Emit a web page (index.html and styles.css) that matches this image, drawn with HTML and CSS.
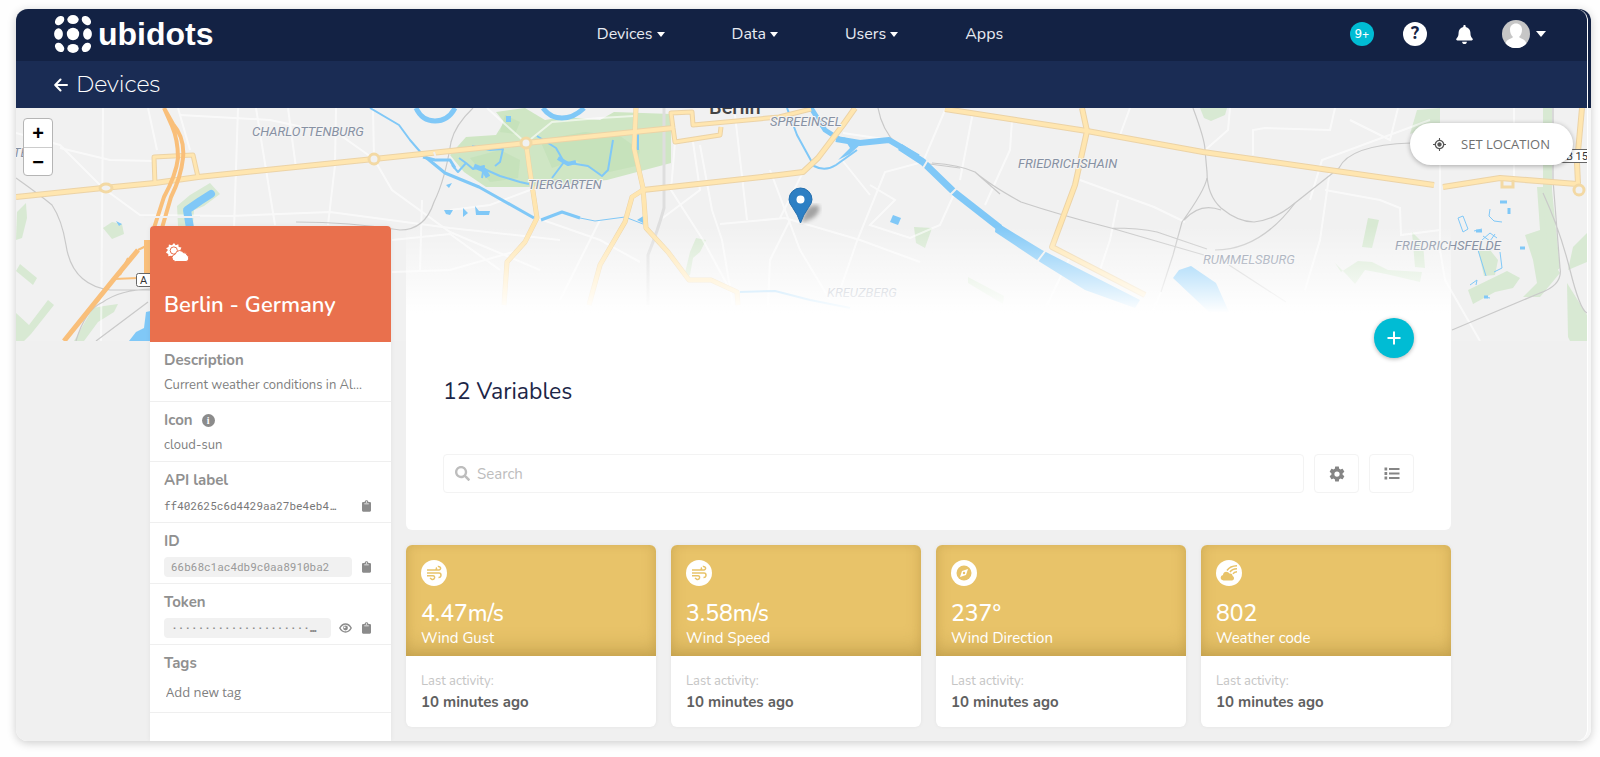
FILE: index.html
```html
<!DOCTYPE html>
<html lang="en">

<head>
    <meta charset="utf-8">
    <title>Berlin - Germany | Devices</title>
    <link rel="stylesheet" href="styles.css">
</head>

<body>

<!-- shared icons -->
<svg class="sprite" aria-hidden="true">
    <symbol id="clipboard" viewBox="0 0 12 16">
        <path fill-rule="evenodd" d="M1.500 2.500H3.500C3.700 1.200 4.700.4 6 .4S8.300 1.200 8.500 2.500H10.500Q12 2.500 12 4V14Q12 15.500 10.500 15.500H1.500Q0 15.500 0 14V4Q0 2.500 1.500 2.500ZM6 1.800A.9.9 0 1 0 6 3.600A.9.9 0 1 0 6 1.800ZM3 4.800V5.800H9V4.800Z"/>
    </symbol>
    <symbol id="wind" viewBox="0 0 16 16">
        <path fill="none" stroke="currentColor" stroke-width="1.500" d="M1 5H8M1 8H13Q15 8 15 10.200Q14.800 12.500 12.500 12.400M1 10.800H7Q9 11 8.500 13Q7.800 15 5.500 14.200L4 13M8 5H13Q15 4.500 14.500 2.800Q13.800 1 11.800 1.500M1 8H4M9.600 5Q11.200 4 10 2.600"/>
    </symbol>
</svg>

<div class="frame">
<div class="window">

    <!-- top bar -->
    <header class="topbar">
        <a href="#" class="logo">
            <svg width="38" height="38" viewBox="0 0 38 38">
                <g fill="#fff">
                    <circle cx="19" cy="19" r="6.200"/>
                    <ellipse cx="19" cy="4.600" rx="5.700" ry="4.500"/>
                    <ellipse cx="19" cy="33.400" rx="5.700" ry="4.500"/>
                    <ellipse cx="4.500" cy="19" rx="4.400" ry="5.700"/>
                    <ellipse cx="33.500" cy="19" rx="4.400" ry="5.700"/>
                    <ellipse cx="5.600" cy="5.600" rx="5.300" ry="3.900" transform="rotate(-45 5.600 5.600)"/>
                    <ellipse cx="32.400" cy="5.600" rx="5.300" ry="3.900" transform="rotate(45 32.400 5.600)"/>
                    <ellipse cx="5.600" cy="32.400" rx="5.300" ry="3.900" transform="rotate(45 5.600 32.400)"/>
                    <ellipse cx="32.400" cy="32.400" rx="5.300" ry="3.900" transform="rotate(-45 32.400 32.400)"/>
                </g>
            </svg>
            <span>ubidots</span>
        </a>
        <nav class="menu">
            <a href="#">Devices<i class="caret"></i></a>
            <a href="#">Data<i class="caret"></i></a>
            <a href="#">Users<i class="caret"></i></a>
            <a href="#">Apps</a>
        </nav>
        <div class="tools">
            <button class="news">9+</button>
            <button class="help">?</button>
            <button class="bell" aria-label="Notifications">
                <svg width="17" height="19" viewBox="0 0 448 512"><path fill="#fff" d="M224 512c35.320 0 63.970-28.650 63.970-64H160.030c0 35.350 28.650 64 63.970 64zm215.390-149.710c-19.320-20.760-55.470-51.990-55.470-154.290 0-77.700-54.480-139.900-127.940-155.160V32c0-17.670-14.320-32-31.980-32s-31.980 14.330-31.980 32v20.840C118.560 68.100 64.080 130.300 64.080 208c0 102.300-36.150 133.530-55.470 154.290-6 6.450-8.660 14.160-8.610 21.710.11 16.400 12.980 32 32.100 32h383.800c19.120 0 32-15.600 32.100-32 .05-7.550-2.610-15.270-8.610-21.710z"/></svg>
            </button>
            <button class="user" aria-label="Account">
                <svg width="28" height="28" viewBox="0 0 28 28">
                    <circle cx="14" cy="14" r="14" fill="#c6c6c6"/>
                    <path fill="#fff" d="M14 3.500C10.500 3.500 8 6 8 9.500C8 12.500 9 15 11 17C9.500 19 4.500 19 3.600 23.500A14 14 0 0 0 24.400 23.500C23.500 19 18.500 19 17 17C19 15 20 12.500 20 9.500C20 6 17.500 3.500 14 3.500Z"/>
                </svg>
                <i class="caret big"></i>
            </button>
        </div>
    </header>

    <div class="subbar">
        <a href="#">
            <svg width="14" height="14" viewBox="0 0 14 14"><path fill="none" stroke="#fff" stroke-width="2" stroke-linecap="round" stroke-linejoin="round" d="M13 7H1.500M6.500 1.500L1.200 7L6.500 12.500"/></svg>
            <span>Devices</span>
        </a>
    </div>

    <!-- map -->
    <section class="map">
        <svg class="map-art" viewBox="16 108 1571 233" preserveAspectRatio="xMidYMin slice">
            <rect x="16" y="108" width="1571" height="233" fill="#f1f1f1"/>

            <!-- parks -->
            <g fill="#d8e9d3">
                <path d="M17 212L26 203L27 218L22 238L16 240Z"/>
                <path d="M103 228L112 222L122 224L124 234L112 239Z"/>
                <path d="M20 264L37 278L33 285L16 271Z"/>
                <path d="M16 313L29 325L48 300L54 305L31 334L24 341H16Z"/>
                <path d="M74 341L93 308L104 306L118 304L114 312L98 322L84 341Z"/>
                <path d="M178 226L177 206L190 195L210 183L220 194L204 206L194 210L193 226Z"/>
                <path d="M1200 108H1227L1225 115L1211 121L1204 118Z"/>
                <path d="M1417 110L1440 108V124L1410 134Z"/>
                <path d="M1368 218L1379 220L1372 248L1362 247Z"/>
                <path d="M1412 232L1423 243L1425 268L1415 267Z"/>
                <path d="M1335 263L1341 272L1358 261L1372 262L1388 270L1422 272L1420 282L1386 274L1365 270L1355 284L1347 275Z"/>
                <path d="M1537 187L1545 187L1553 262L1560 273L1540 297L1523 297L1537 283L1533 260L1525 235L1540 230Z"/>
                <path d="M1543 108H1552V190L1560 268L1550 276L1543 200Z"/>
                <path d="M1587 233L1573 247L1568 270L1587 262Z"/>
                <path d="M1567 283L1568 337L1570 341H1587V315Z"/>
                <path d="M1468 290L1507 271L1520 278L1513 288L1495 292L1473 304Z"/>
                <path d="M1478 250L1490 250L1498 260L1495 275L1484 276Z"/>
                <path d="M696 238L706 240L700 252L693 258L690 275L684 277L690 252Z"/>
                <path d="M914 227L932 228L925 248L916 243Z"/>
                <path d="M968 277L1004 296L1003 304L968 283Z"/>
            </g>
            <path fill="#cfe6c4" d="M450 155L466 137L496 135L504 122L496 112L525 108L545 120L564 117L600 120L614 112L671 114V163L607 180L570 184L529 187L486 187L464 172Z"/>
            <path fill="#bfdfb5" opacity=".6" d="M540 140L585 132L620 136L640 150L636 166L600 174L575 160L552 168ZM470 158L500 150L520 160L518 178L490 182ZM505 115L520 122L515 134L500 132Z"/>

            <!-- small streets -->
            <g fill="none" stroke="#fff" stroke-width="2" opacity=".6">
                <path d="M16 133L60 145L103 188L140 215L230 216L330 212L450 228L560 240"/>
                <path d="M60 148L110 160L155 161M103 108L101 341M148 108L157 150M178 108L190 150M238 108L234 230M256 108L275 225M288 108L296 168"/>
                <path d="M336 108L335 165L328 225M374 159L373 108M374 159L392 190L450 232L540 270M374 159L340 135L270 120L180 115"/>
                <path d="M422 200L420 270M392 272L450 270L520 250M392 240L450 234L500 270M537 218L600 240L640 262"/>
                <path d="M526 143L487 108M526 143L552 122L600 118L634 116M700 145L712 210L722 240L733 305M735 115L747 220M693 142L700 190L660 220"/>
                <path d="M675 142L671 190L703 240L730 290M720 224L785 218L860 240L920 262M790 220L770 260L768 305M803 172L780 218"/>
                <path d="M843 133L890 140L923 162M945 110L923 162L885 172L857 241L840 290M973 112L960 180M1012 120L1010 150L985 205"/>
                <path d="M870 185L895 200L870 225L910 238L940 225L955 192M842 160L870 195M1120 135L1130 108M1080 180L1154 207L1185 222M1118 200L1110 240L1100 270"/>
                <path d="M1230 108L1228 130L1203 152M1253 155L1253 130L1265 128L1330 130L1335 108M1350 120L1390 140L1398 108M1310 200L1322 160L1430 120M1325 190L1380 200L1400 208L1401 235L1440 230"/>
                <path d="M1440 124V250L1445 280L1480 341M1330 170L1320 240L1305 290M1514 108V180"/>
                <path d="M1071 255L1047 305M1161 292L1140 341M770 170L800 250L830 300M600 220L560 300M450 210L490 205L530 190"/>
            </g>

            <!-- rail -->
            <g fill="none" stroke="#c9c9c9" stroke-width="1.200">
                <path d="M16 178Q40 195 52 205Q62 220 66 245Q72 285 110 290H150M76 341Q85 310 103 302Q120 290 150 289M96 341L148 302"/>
                <path d="M473 108Q455 125 451 142Q445 180 434 202Q425 230 400 230Q350 222 296 222"/>
                <path d="M932 163Q960 165 975 172Q990 185 1021 202Q1060 215 1111 228L1204 255M975 172L1000 194M1111 228Q1140 228 1157 232L1207 249"/>
                <path d="M1193 108Q1205 140 1205 150L1207 172Q1207 195 1221 208Q1238 222 1254 222Q1275 220 1295 203L1339 168Q1350 145 1411 143"/>
                <path d="M1207 178Q1205 190 1182 222L1173 255L1161 292M1184 220Q1200 202 1221 210M1295 203Q1260 250 1215 250M1229 265L1286 302"/>
                <path d="M1452 330L1540 293Q1563 285 1560 268L1553 180V108M1543 193Q1560 230 1570 270T1587 313M878 108Q882 130 897 145M922 163L960 168"/>
            </g>
            <path fill="none" stroke="#dedede" stroke-width="3" d="M664 108V208Q658 230 648 255V305"/>

            <!-- water -->
            <g fill="none" stroke="#80c8f7" stroke-linejoin="round">
                <path stroke-width="2" d="M370 108L399 125L410 140L423 155"/>
                <path stroke-width="2" d="M452 165L458 172L466 163L473 169L484 166L482 178M466 163L459 158M482 168L500 176L520 182L529 184M472 146L490 150L503 149L500 162L495 166"/>
                <path stroke-width="5" d="M474 166L484 170L488 177"/>
                <path stroke-width="3" d="M423 155L445 173L479 187L534 218"/>
                <path stroke-width="3" d="M423 157L435 160L450 160L455 168"/>
                <path stroke-width="2" d="M537 136L556 148L564 162L588 166L602 176L608 170L613 140M564 162L552 178M638 134V150"/>
                <path stroke-width="4" d="M558 158L568 164L576 162"/>
                <path stroke-width="3" d="M541 220L562 212L580 218"/>
                <path stroke-width="1" d="M580 218L595 221L625 217L643 224"/>
                <path stroke-width="5" d="M416 108Q422 121 435 121T455 108M543 108Q550 118 562 118T584 108"/>
                <path stroke-width="8" stroke-linecap="round" d="M190 228L187 210L200 201L211 194"/>
                <path stroke-width="5" d="M811 108L825 130L839 139"/>
                <path stroke-width="6" d="M836 139L860 143L889 140L918 157"/>
                <path stroke-width="7" d="M900 147L923 162L954 192L1000 228"/>
                <path stroke-width="2" d="M787 108L797 135L814 166Q825 172 836 165L857 150"/>
                <path stroke-width="2" d="M740 292L775 291L810 300L850 308"/>
                <path stroke-width="1" d="M1490 209L1489 216L1494 221L1502 222M1474 231L1482 229M1482 240L1490 233L1497 238M1478 250L1486 276M1500 252L1502 268L1494 272M1470 285L1477 280L1476 285M1484 297L1490 298M1458 218L1463 232L1468 229L1463 216ZM1483 236L1490 241L1495 234"/>
                <path stroke-width="3" d="M1500 202H1507M1509 208V214M1520 248H1525M1476 231H1482M1484 297H1488"/>
            </g>
            <g fill="#80c8f7">
                <path d="M843 137L862 143L850 154L838 160L850 148Z"/>
                <path d="M996 222L1042 250L1140 300L1135 308L1085 290L1040 262L995 232Z"/>
                <path d="M1173 278L1179 270L1191 266L1216 283L1229 312H1209Z"/>
                <path d="M893 215L901 218L898 225L890 222Z"/>
                <path d="M129 341L136 332L144 328L146 312L155 310V341Z"/>
                <path d="M444 210L453 210L450 215L446 214ZM463 208L468 213L463 217ZM475 206L479 211L490 211L489 215L476 215ZM446 185L452 183L449 188ZM456 181L461 183M637 220L645 215L643 223Z"/>
                <path d="M506 116H511V122H506ZM116 221L122 224L119 226Z"/>
            </g>

            <!-- main roads, casing first -->
            <g fill="none" stroke="#ecd3a6" stroke-width="6" stroke-linejoin="round">
                <path d="M16 197L103 188L155 183L198 177L374 159L526 143L673 128"/>
                <path d="M155 185L154 157L193 155L198 177" stroke-width="5"/>
                <path d="M673 128L671 113L692 112L693 125L779 117L811 109M673 128L675 142L720 135L721 127" stroke-width="5"/>
                <path d="M526 143L529 165L537 218L525 242L507 262L504 305" stroke-width="5"/>
                <path d="M636 108L634 148L643 188L646 228L668 252L689 280L711 280L737 292L738 305" stroke-width="5"/>
                <path d="M643 190L632 197L625 222L600 265L589 305" stroke-width="5"/>
                <path d="M643 190L779 175L803 172L818 158L843 125L855 108"/>
                <path d="M945 109L1087 131L1203 152L1329 170L1434 185M1443 187L1500 178L1577 184"/>
                <path d="M1082 108L1087 131L1075 185L1052 247L1145 295"/>
                <path d="M1582 108L1577 163L1578 184"/>
            </g>
            <g fill="none" stroke="#ffe6b0" stroke-width="4" stroke-linejoin="round">
                <path d="M16 197L103 188L155 183L198 177L374 159L526 143L673 128"/>
                <path d="M155 185L154 157L193 155L198 177" stroke-width="3"/>
                <path d="M673 128L671 113L692 112L693 125L779 117L811 109M673 128L675 142L720 135L721 127" stroke-width="3"/>
                <path d="M526 143L529 165L537 218L525 242L507 262L504 305"/>
                <path d="M636 108L634 148L643 188L646 228L668 252L689 280L711 280L737 292L738 305"/>
                <path d="M643 190L632 197L625 222L600 265L589 305"/>
                <path d="M643 190L779 175L803 172L818 158L843 125L855 108"/>
                <path d="M945 109L1087 131L1203 152L1329 170L1434 185M1443 187L1500 178L1577 184"/>
                <path d="M1082 108L1087 131L1075 185L1052 247L1145 295"/>
                <path d="M1582 108L1577 163L1578 184"/>
            </g>
            <g fill="#f1f1f1" stroke="#f3d9a4" stroke-width="3">
                <ellipse cx="106" cy="188" rx="6" ry="4"/>
                <circle cx="374" cy="159" r="5"/>
                <circle cx="526" cy="143" r="5"/>
                <circle cx="1579" cy="190" r="5"/>
                <path d="M1502 181V187H1513V180" fill="none"/>
            </g>
            <!-- autobahn -->
            <g fill="none" stroke="#f9bf7a" stroke-width="4">
                <path d="M164 108L173 124Q185 138 183 158Q181 177 171 197L162 228M164 108L172 126Q178 140 178 158Q176 175 164 197L154 228"/>
                <path d="M64 341L114 279L138 250" stroke-width="5"/>
                <path d="M114 279L138 278M120 275L128 258M138 250L146 246" stroke-width="2"/>
                <path d="M147 240V273" stroke-width="6"/>
            </g>
            <path fill="none" stroke="#f0f0f0" stroke-width="2" d="M144 217H200M434 152L436 158M923 168L929 158M949 196L958 187M1036 263L1046 250"/>

            <g class="area">
                <text x="252" y="136">CHARLOTTENBURG</text>
                <text x="770" y="126">SPREEINSEL</text>
                <text x="528" y="189">TIERGARTEN</text>
                <text x="1018" y="168">FRIEDRICHSHAIN</text>
                <text x="1203" y="264">RUMMELSBURG</text>
                <text x="1395" y="250">FRIEDRICHSFELDE</text>
                <text x="827" y="297">KREUZBERG</text>
                <text x="13" y="157">TE</text>
            </g>
            <text class="city" x="709" y="114">Berlin</text>
            <g fill="#fff" stroke="#666">
                <rect x="136.500" y="273.500" width="24" height="13" rx="2"/>
                <rect x="1560.500" y="149.500" width="34" height="13" rx="2"/>
            </g>
            <text class="road" x="140" y="284">A</text>
            <text class="road" x="1566" y="160">B 158</text>
        </svg>

        <svg class="marker" width="40" height="38" viewBox="0 0 40 38">
            <defs>
                <linearGradient id="pin" x1="0" y1="0" x2="0" y2="1"><stop offset="0" stop-color="#2f7fc2"/><stop offset="1" stop-color="#2a7fc6"/></linearGradient>
                <filter id="soft"><feGaussianBlur stdDeviation="2"/></filter>
            </defs>
            <path fill="#555" opacity=".5" filter="url(#soft)" d="M13 36L18 22Q26 16 31 19Q33 25 25 31Z"/>
            <path fill="url(#pin)" stroke="#256fae" d="M12.500 36Q10 28 4.500 20.500Q1 16 1 12.500A11.500 11.500 0 0 1 24 12.500Q24 16 20.500 20.500Q15 28 12.500 36Z"/>
            <circle cx="12.500" cy="12.500" r="4" fill="#fff"/>
        </svg>

        <div class="zoom">
            <button>+</button>
            <button>&minus;</button>
        </div>
        <button class="set-location">
            <svg width="13" height="13" viewBox="0 0 24 24"><path fill="#555" fill-rule="evenodd" d="M12 8c-2.210 0-4 1.790-4 4s1.790 4 4 4 4-1.790 4-4-1.790-4-4-4zm8.940 3c-.46-4.170-3.770-7.480-7.940-7.940V0h-2v3.060C6.830 3.520 3.520 6.830 3.060 11H0v2h3.060c.46 4.170 3.770 7.480 7.940 7.940V24h2v-3.060c4.170-.46 7.480-3.770 7.940-7.940H24v-2h-3.060zM12 18.500c-3.600 0-6.500-2.900-6.500-6.500s2.900-6.500 6.500-6.500 6.500 2.900 6.500 6.500-2.900 6.500-6.500 6.500z"/></svg>
            SET LOCATION
        </button>
    </section>

    <!-- content -->
    <main class="content">
        <aside class="side">
            <div class="side-head">
                <svg width="23" height="19" viewBox="0 0 23 19">
                    <path fill="#fff" d="M8 0L9.700 2.200L12.300 1.200L12.700 4L15.400 4.600L14.300 7.200L15 8H1L2.100 7L0 5.200L2.600 4L2.900 1.400L6 2.300Z"/>
                    <path fill="#fff" d="M1 8L0 9.800L2.300 10.900L2.300 13.300L5 12.700L8 14L14 8Z"/>
                    <circle cx="7.800" cy="7.500" r="3.600" fill="none" stroke="#e9704d"/>
                    <path fill="#fff" stroke="#e9704d" d="M9.500 18.500Q5.800 18 6 14.500Q6.500 11.500 9.200 11.300Q10 7.800 13.500 7.500Q16 7.500 17.200 9.600Q20.800 9.400 21 12.300Q23.200 13.200 22.700 16Q22 18.500 20 18.500Z"/>
                </svg>
                <h1>Berlin - Germany</h1>
            </div>
            <div class="row">
                <h4>Description</h4>
                <p>Current weather conditions in Al...</p>
            </div>
            <div class="row">
                <h4>Icon <span class="info">i</span></h4>
                <p>cloud-sun</p>
            </div>
            <div class="row">
                <h4>API label</h4>
                <div class="line">
                    <code>ff402625c6d4429aa27be4eb4…</code>
                    <button aria-label="Copy"><svg width="9" height="12"><use href="#clipboard"/></svg></button>
                </div>
            </div>
            <div class="row">
                <h4><label for="dev-id">ID</label></h4>
                <div class="line">
                    <input id="dev-id" type="text" value="66b68c1ac4db9c0aa8910ba2" readonly>
                    <button aria-label="Copy"><svg width="9" height="12"><use href="#clipboard"/></svg></button>
                </div>
            </div>
            <div class="row">
                <h4><label for="dev-token">Token</label></h4>
                <div class="line">
                    <input id="dev-token" class="dots" type="text" value="·····················…" readonly>
                    <button aria-label="Show"><svg width="13" height="10" viewBox="0 0 13 10"><path fill="none" stroke="#8b8b8b" stroke-width="1.400" d="M.8 5Q3 1 6.500 1T12.200 5Q10 9 6.500 9T.8 5Z"/><circle cx="6.500" cy="5" r="2.400"/><circle cx="5.700" cy="4.300" r=".9" fill="#fff"/></svg></button>
                    <button aria-label="Copy"><svg width="9" height="12"><use href="#clipboard"/></svg></button>
                </div>
            </div>
            <div class="row tags">
                <h4><label for="tag">Tags</label></h4>
                <input id="tag" type="text" placeholder="Add new tag">
            </div>
        </aside>

        <div class="main">
            <section class="panel">
                <div class="panel-top">
                    <button class="plus" aria-label="Add variable">
                        <svg width="14" height="14" viewBox="0 0 14 14"><path stroke="#fff" stroke-width="2" d="M7 .5V13.500M.5 7H13.500"/></svg>
                    </button>
                </div>
                <h2>12 Variables</h2>
                <div class="filter">
                    <label class="search">
                        <svg width="15" height="15" viewBox="0 0 512 512"><path fill="#bdbdbd" d="M505 442.700L405.300 343c-4.500-4.500-10.600-7-17-7H372c27.600-35.300 44-79.700 44-128C416 93.100 322.900 0 208 0S0 93.100 0 208s93.100 208 208 208c48.300 0 92.700-16.400 128-44v16.300c0 6.400 2.500 12.500 7 17l99.700 99.700c9.400 9.400 24.600 9.400 33.900 0l28.300-28.300c9.400-9.400 9.400-24.600.1-34zM208 336c-70.700 0-128-57.200-128-128 0-70.700 57.200-128 128-128 70.700 0 128 57.200 128 128 0 70.700-57.200 128-128 128z"/></svg>
                        <input type="text" placeholder="Search">
                    </label>
                    <button aria-label="Settings">
                        <svg width="18" height="18" viewBox="0 0 24 24"><path fill="#858585" fill-rule="evenodd" d="M19.430 12.980c.04-.32.07-.64.07-.98s-.03-.66-.07-.98l2.110-1.650c.19-.15.24-.42.12-.64l-2-3.460c-.12-.22-.39-.3-.61-.22l-2.490 1c-.52-.4-1.080-.73-1.690-.98l-.38-2.650C14.460 2.180 14.250 2 14 2h-4c-.25 0-.46.18-.49.42l-.38 2.650c-.61.25-1.170.59-1.690.98l-2.490-1c-.23-.09-.49 0-.61.22l-2 3.460c-.13.22-.07.49.12.64l2.110 1.650c-.04.32-.07.65-.07.98s.03.66.07.98l-2.110 1.650c-.19.15-.24.42-.12.64l2 3.460c.12.22.39.3.61.22l2.490-1c.52.4 1.080.73 1.690.98l.38 2.650c.03.24.24.42.49.42h4c.25 0 .46-.18.49-.42l.38-2.650c.61-.25 1.170-.59 1.690-.98l2.490 1c.23.09.49 0 .61-.22l2-3.460c.12-.22.07-.49-.12-.64l-2.110-1.650zM12 8.500a3.500 3.500 0 1 0 0 7a3.500 3.500 0 1 0 0-7z"/></svg>
                    </button>
                    <button aria-label="List view">
                        <svg width="16" height="13" viewBox="0 0 16 13"><path stroke="#858585" stroke-width="2" d="M5 2H15.500M5 6.500H15.500M5 11H15.500"/><path stroke="#858585" stroke-width="3" d="M.5 2H3.200M.5 6.500H3.200M.5 11H3.200"/></svg>
                    </button>
                </div>
            </section>

            <section class="cards">
                <article class="card">
                    <div class="card-head">
                        <span class="badge"><svg width="16" height="16"><use href="#wind"/></svg></span>
                        <strong>4.47m/s</strong>
                        <span>Wind Gust</span>
                    </div>
                    <div class="card-body"><small>Last activity:</small><b>10 minutes ago</b></div>
                </article>
                <article class="card">
                    <div class="card-head">
                        <span class="badge"><svg width="16" height="16"><use href="#wind"/></svg></span>
                        <strong>3.58m/s</strong>
                        <span>Wind Speed</span>
                    </div>
                    <div class="card-body"><small>Last activity:</small><b>10 minutes ago</b></div>
                </article>
                <article class="card">
                    <div class="card-head">
                        <span class="badge"><svg width="16" height="16" viewBox="0 0 16 16"><circle cx="8" cy="8" r="7.500" fill="#e8c369"/><path fill="#fff" fill-rule="evenodd" d="M12 4L10 10L4 12L6 6ZM8 6.800A1.200 1.200 0 1 0 8 9.200A1.200 1.200 0 1 0 8 6.800Z"/></svg></span>
                        <strong>237°</strong>
                        <span>Wind Direction</span>
                    </div>
                    <div class="card-body"><small>Last activity:</small><b>10 minutes ago</b></div>
                </article>
                <article class="card">
                    <div class="card-head">
                        <span class="badge"><svg width="18" height="16" viewBox="0 0 18 16"><path fill="#e8c369" d="M3.500 15.500Q.5 15 .7 12.300Q1 10.300 3 10Q3.200 7 6.200 6.700Q8.500 6.700 9.500 8.600Q12.500 8.300 12.700 11Q14.300 11.800 14 13.800Q13.600 15.500 12 15.500Z"/><path fill="none" stroke="#e8c369" stroke-width="1.500" d="M7 5.500Q10 1 17 .8M10 7Q12 3.900 17 3.800M13 8.800Q14 7 17 6.800"/></svg></span>
                        <strong>802</strong>
                        <span>Weather code</span>
                    </div>
                    <div class="card-body"><small>Last activity:</small><b>10 minutes ago</b></div>
                </article>
            </section>
        </div>
    </main>

</div>
</div>

</body>
</html>
```
FILE: styles.css
```css
* {
    box-sizing: border-box;
}

body {
    margin: 0;
    padding: 9px 9px 16px 16px;
    background: #fefefe;
    font-family: Nunito, Lato, sans-serif;
    color: #808080;
}

h1, h2, h4, p {
    margin: 0;
}

a {
    color: inherit;
    text-decoration: none;
}

button {
    font-family: inherit;
    padding: 0;
    border: none;
    background: none;
    cursor: pointer;
}

svg {
    display: block;
    flex: none;
}

.sprite {
    position: absolute;
    width: 0;
    height: 0;
}

/* outer window */
.frame {
    padding-right: 3px;
    border-radius: 12px;
    background: linear-gradient(#132244 99px, #f7f7f7 99px);
    box-shadow: 0 2px 10px rgba(0, 0, 0, 0.2);
}

.window {
    overflow: hidden;
    border-right: 1px solid #fff;
    border-radius: 12px;
    background: #f0f0f0;
}

.topbar {
    display: flex;
    align-items: center;
    height: 52px;
    padding: 0 41px 2px 38px;
    background: #132244;
    color: #fff;
}

.logo {
    display: flex;
    align-items: center;
    flex: 1;
    gap: 6px;
    font: bold 32px/38px "Liberation Sans", sans-serif;
}

.menu {
    display: flex;
    gap: 67px;
    font-size: 16px;
    line-height: 24px;
    color: #e8ebf2;
}

.menu a {
    display: flex;
    align-items: center;
    gap: 4px;
}

.caret {
    border: 4px solid transparent;
    border-top: 5px solid #fff;
    border-bottom: 0;
}

.big {
    border-width: 5px;
    border-top-width: 6px;
    border-bottom: 0;
}

.tools {
    display: flex;
    align-items: center;
    justify-content: flex-end;
    flex: 1;
    gap: 29px;
}

.news, .help {
    width: 24px;
    height: 24px;
    border-radius: 50%;
    background: #00bcd4;
    color: #fff;
    font-size: 12px;
    font-weight: 600;
}

.help {
    background: #fff;
    color: #132244;
    font-size: 17px;
    font-weight: 800;
    line-height: 24px;
}

.user {
    display: flex;
    align-items: center;
    gap: 6px;
}

.subbar {
    padding: 9px 38px 8px;
    background: #1a2c54;
    color: #fff;
}

.subbar a {
    display: inline-flex;
    align-items: center;
    gap: 8px;
    font: 300 22px/30px Montserrat, Inter, sans-serif;
}

/* map */
.map {
    position: relative;
    height: 233px;
}

.map-art {
    width: 100%;
    height: 100%;
}

.area {
    font: italic 13px Roboto, sans-serif;
    fill: #8791a3;
    stroke: #f4f4f4;
    stroke-width: 2px;
    paint-order: stroke;
}

.city {
    font: 500 20px Roboto, sans-serif;
    fill: #444;
}

.road {
    font: 11px Roboto, sans-serif;
    fill: #333;
}

.marker {
    position: absolute;
    top: 79px;
    left: calc(50% - 14px);
}

.zoom {
    position: absolute;
    top: 10px;
    left: 7px;
    display: grid;
    width: 30px;
    border: 1px solid #b5b5b5;
    border-radius: 4px;
    background: #fff;
}

.zoom button {
    height: 28px;
    color: #000;
    font: bold 20px/26px "Liberation Sans", sans-serif;
}

.zoom button + button {
    border-top: 1px solid #ccc;
}

.set-location {
    position: absolute;
    top: 15px;
    right: 14px;
    display: flex;
    align-items: center;
    gap: 15px;
    height: 42px;
    padding: 0 23px;
    border-radius: 21px;
    background: #fff;
    box-shadow: 0 1px 5px rgba(0, 0, 0, 0.3);
    color: #707070;
    font: 13px "Open Sans", sans-serif;
}

/* content */
.content {
    position: relative;
    display: flex;
    gap: 15px;
    margin-top: -115px;
    padding: 0 136px 0 134px;
}

.side {
    flex: none;
    width: 241px;
    background: #fff;
    border-radius: 4px 4px 0 0;
    box-shadow: 0 0 5px rgba(0, 0, 0, 0.06);
}

.side-head {
    padding: 17px 14px 22px;
    border-radius: 4px 4px 0 0;
    background: #e9704d;
    color: #fff;
}

.side-head svg {
    margin-left: 2px;
}

.side-head h1 {
    margin-top: 28px;
    font-size: 22px;
    font-weight: 600;
    line-height: 30px;
}

.row {
    padding: 8px 14px 6px;
    border-bottom: 1px solid #efefef;
}

.row h4 {
    display: flex;
    align-items: center;
    gap: 9px;
    margin-bottom: 5px;
    font-size: 15px;
    line-height: 20px;
    color: #909090;
}

.row p {
    font-size: 13px;
    line-height: 20px;
}

.info {
    width: 13px;
    height: 13px;
    border-radius: 50%;
    background: #8b8b8b;
    color: #fff;
    font: bold 10px/13px "Liberation Serif", serif;
    text-align: center;
}

.line {
    display: flex;
    align-items: center;
    gap: 8px;
    height: 21px;
    padding-right: 5px;
}

.line code, .line input {
    flex: 1;
    min-width: 0;
    font: 11px "Roboto Mono", "DejaVu Sans Mono", monospace;
    color: #777;
}

.line input {
    height: 20px;
    padding: 0 7px;
    border: none;
    border-radius: 4px;
    background: #f1f1f1;
    color: #999;
}

.line .dots {
    font-weight: bold;
    color: #888;
}

.line button {
    display: grid;
    place-items: center;
    min-width: 12px;
    fill: #8b8b8b;
}

.tags input {
    width: 100%;
    height: 28px;
    padding: 0 2px;
    border: none;
    font: 13px "Open Sans", sans-serif;
}

.tags input::placeholder {
    color: #808080;
}

.main {
    flex: 1;
    min-width: 0;
    padding-bottom: 14px;
}

.panel {
    padding: 92px 37px 37px;
    border-radius: 0 0 6px 6px;
    background: linear-gradient(rgba(255, 255, 255, 0), #fff 87px);
}

.panel-top {
    display: flex;
    justify-content: flex-end;
}

.plus {
    display: grid;
    place-items: center;
    width: 40px;
    height: 40px;
    border-radius: 50%;
    background: #00bcd4;
    box-shadow: 0 1px 4px rgba(0, 0, 0, 0.3);
}

.panel h2 {
    margin: 19px 0 47px;
    color: #1c2647;
    font-size: 23px;
    font-weight: normal;
    line-height: 30px;
}

.filter {
    display: flex;
    gap: 10px;
}

.search, .filter button {
    display: flex;
    align-items: center;
    height: 39px;
    border: 1px solid #f3f3f3;
    border-radius: 4px;
}

.search {
    flex: 1;
    gap: 7px;
    padding: 0 11px;
}

.search input {
    flex: 1;
    padding: 0;
    border: none;
    background: none;
    font: 15px Nunito, Lato, sans-serif;
}

.search input::placeholder {
    color: #bdbdbd;
}

.filter button {
    justify-content: center;
    width: 45px;
}

.cards {
    display: grid;
    grid-template-columns: repeat(4, 1fr);
    gap: 15px;
    margin-top: 15px;
}

.card {
    overflow: hidden;
    border-radius: 6px;
    background: #fff;
    box-shadow: 0 0 4px rgba(0, 0, 0, 0.05);
}

.card-head {
    display: flex;
    flex-direction: column;
    padding: 15px 15px 8px;
    background: #e8c369;
    box-shadow: inset 0 -14px 20px -6px rgba(120, 90, 20, 0.25), inset 0 0 10px rgba(120, 90, 20, 0.15);
    color: #fff;
    font-size: 15px;
    line-height: 20px;
}

.card-head strong {
    margin-top: 14px;
    font-size: 23px;
    font-weight: 500;
    line-height: 28px;
}

.badge {
    display: grid;
    place-items: center;
    width: 26px;
    height: 26px;
    border-radius: 50%;
    background: #fff;
    color: #e8c369;
}

.card-body {
    display: grid;
    padding: 15px 15px 14px;
    line-height: 21px;
}

.card-body small {
    color: #c5c5c5;
    font-size: 13px;
}

.card-body b {
    color: #606060;
    font-size: 15px;
}
```
